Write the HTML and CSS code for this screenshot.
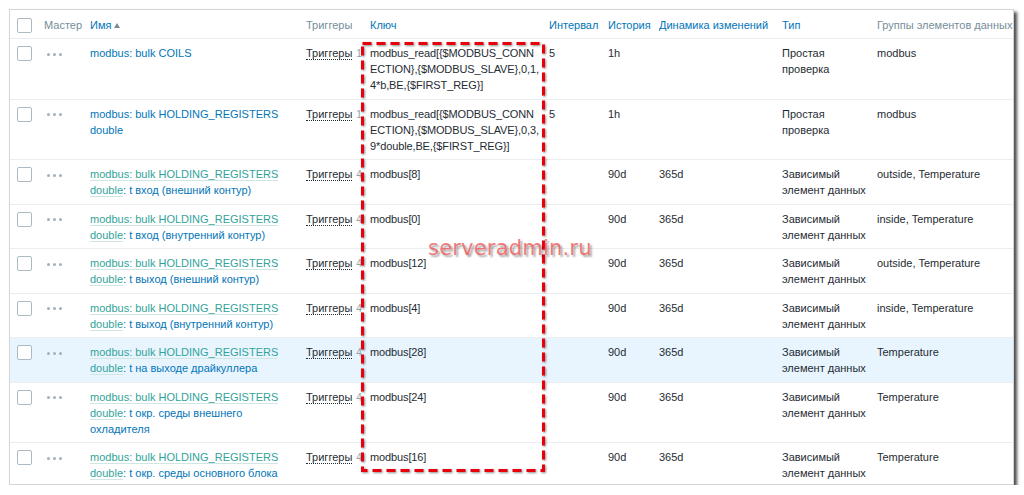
FILE: index.html
```html
<!DOCTYPE html>
<html lang="ru">
<head>
<meta charset="utf-8">
<title>Элементы данных</title>
<link rel="stylesheet" href="styles.css">
</head>
<body>
<div class="panel">
  <table class="list">
    <colgroup>
      <col class="c-check"><col class="c-master"><col class="c-name"><col class="c-trig"><col class="c-key"><col class="c-int"><col class="c-hist"><col class="c-trend"><col class="c-type"><col class="c-groups">
    </colgroup>
    <thead>
      <tr>
        <th class="cb-cell"><span class="cb"></span></th>
        <th class="muted">Мастер</th>
        <th><span class="sort">Имя</span><span class="arrow"></span></th>
        <th class="muted">Триггеры</th>
        <th class="sort">Ключ</th>
        <th class="sort">Интервал</th>
        <th class="sort">История</th>
        <th class="sort">Динамика изменений</th>
        <th class="sort">Тип</th>
        <th class="muted">Группы элементов данных</th>
      </tr>
    </thead>
    <tbody>
      <tr>
        <td class="cb-cell"><span class="cb"></span></td>
        <td><span class="more"><i></i><i></i><i></i></span></td>
        <td><span class="link">modbus: bulk COILS</span></td>
        <td><span class="trig">Триггеры</span><span class="cnt">1</span></td>
        <td class="key">modbus_read[{$MODBUS_CONN<wbr>ECTION},{$MODBUS_SLAVE},0,1,<wbr>4*b,BE,{$FIRST_REG}]</td>
        <td>5</td>
        <td>1h</td>
        <td></td>
        <td>Простая проверка</td>
        <td>modbus</td>
      </tr>
      <tr>
        <td class="cb-cell"><span class="cb"></span></td>
        <td><span class="more"><i></i><i></i><i></i></span></td>
        <td><span class="link">modbus: bulk HOLDING_REGISTERS double</span></td>
        <td><span class="trig">Триггеры</span><span class="cnt">1</span></td>
        <td class="key">modbus_read[{$MODBUS_CONN<wbr>ECTION},{$MODBUS_SLAVE},0,3,<wbr>9*double,BE,{$FIRST_REG}]</td>
        <td>5</td>
        <td>1h</td>
        <td></td>
        <td>Простая проверка</td>
        <td>modbus</td>
      </tr>
      <tr>
        <td class="cb-cell"><span class="cb"></span></td>
        <td><span class="more"><i></i><i></i><i></i></span></td>
        <td><span class="teal">modbus: bulk HOLDING_REGISTERS double</span><span class="link">: t вход (внешний контур)</span></td>
        <td><span class="trig">Триггеры</span><span class="cnt">4</span></td>
        <td class="key">modbus[8]</td>
        <td></td>
        <td>90d</td>
        <td>365d</td>
        <td>Зависимый элемент данных</td>
        <td>outside, Temperature</td>
      </tr>
      <tr>
        <td class="cb-cell"><span class="cb"></span></td>
        <td><span class="more"><i></i><i></i><i></i></span></td>
        <td><span class="teal">modbus: bulk HOLDING_REGISTERS double</span><span class="link">: t вход (внутренний контур)</span></td>
        <td><span class="trig">Триггеры</span><span class="cnt">4</span></td>
        <td class="key">modbus[0]</td>
        <td></td>
        <td>90d</td>
        <td>365d</td>
        <td>Зависимый элемент данных</td>
        <td>inside, Temperature</td>
      </tr>
      <tr>
        <td class="cb-cell"><span class="cb"></span></td>
        <td><span class="more"><i></i><i></i><i></i></span></td>
        <td><span class="teal">modbus: bulk HOLDING_REGISTERS double</span><span class="link">: t выход (внешний контур)</span></td>
        <td><span class="trig">Триггеры</span><span class="cnt">4</span></td>
        <td class="key">modbus[12]</td>
        <td></td>
        <td>90d</td>
        <td>365d</td>
        <td>Зависимый элемент данных</td>
        <td>outside, Temperature</td>
      </tr>
      <tr>
        <td class="cb-cell"><span class="cb"></span></td>
        <td><span class="more"><i></i><i></i><i></i></span></td>
        <td><span class="teal">modbus: bulk HOLDING_REGISTERS double</span><span class="link">: t выход (внутренний контур)</span></td>
        <td><span class="trig">Триггеры</span><span class="cnt">4</span></td>
        <td class="key">modbus[4]</td>
        <td></td>
        <td>90d</td>
        <td>365d</td>
        <td>Зависимый элемент данных</td>
        <td>inside, Temperature</td>
      </tr>
      <tr class="hover">
        <td class="cb-cell"><span class="cb"></span></td>
        <td><span class="more"><i></i><i></i><i></i></span></td>
        <td><span class="teal">modbus: bulk HOLDING_REGISTERS double</span><span class="link">: t на выходе драйкуллера</span></td>
        <td><span class="trig">Триггеры</span><span class="cnt">4</span></td>
        <td class="key">modbus[28]</td>
        <td></td>
        <td>90d</td>
        <td>365d</td>
        <td>Зависимый элемент данных</td>
        <td>Temperature</td>
      </tr>
      <tr>
        <td class="cb-cell"><span class="cb"></span></td>
        <td><span class="more"><i></i><i></i><i></i></span></td>
        <td><span class="teal">modbus: bulk HOLDING_REGISTERS double</span><span class="link">: t окр. среды внешнего охладителя</span></td>
        <td><span class="trig">Триггеры</span><span class="cnt">4</span></td>
        <td class="key">modbus[24]</td>
        <td></td>
        <td>90d</td>
        <td>365d</td>
        <td>Зависимый элемент данных</td>
        <td>Temperature</td>
      </tr>
      <tr>
        <td class="cb-cell"><span class="cb"></span></td>
        <td><span class="more"><i></i><i></i><i></i></span></td>
        <td><span class="teal">modbus: bulk HOLDING_REGISTERS double</span><span class="link">: t окр. среды основного блока</span></td>
        <td><span class="trig">Триггеры</span><span class="cnt">4</span></td>
        <td class="key">modbus[16]</td>
        <td></td>
        <td>90d</td>
        <td>365d</td>
        <td>Зависимый элемент данных</td>
        <td>Temperature</td>
      </tr>
    </tbody>
  </table>

  <svg class="highlight-box" width="187" height="433" viewBox="0 0 187 433">
    <rect x="1.5" y="1.5" width="181" height="427" fill="none" stroke="#e8000b" stroke-width="3" stroke-dasharray="9 5"/>
  </svg>
  <div class="watermark">serveradmin.ru</div>
</div>
</body>
</html>
```

FILE: styles.css
```css
html, body {
  margin: 0;
  padding: 0;
  background: #ffffff;
}

body {
  font-family: "Liberation Sans", Arial, sans-serif;
  font-size: 11px;
  color: #1f2c33;
}

.panel {
  position: relative;
  margin: 9px 0 0 9px;
  width: 1003px;
  height: 474px;
  border: 1px solid #d3d6d8;
  background: #ffffff;
  box-shadow: 3px 3px 3px rgba(0, 0, 0, 0.7);
  overflow: hidden;
}

.list {
  width: 1003px;
  table-layout: fixed;
  border-collapse: collapse;
}

.c-check { width: 29px; }
.c-master { width: 46px; }
.c-name { width: 216px; }
.c-trig { width: 64px; }
.c-key { width: 179px; }
.c-int { width: 59px; }
.c-hist { width: 51px; }
.c-trend { width: 123px; }
.c-type { width: 95px; }
.c-groups { width: 141px; }

.list th {
  text-align: left;
  font-weight: normal;
  padding: 7px 5px 5px;
  line-height: 16px;
  white-space: nowrap;
  overflow: hidden;
  border-bottom: 1px solid #ebeef0;
  color: #0275b8;
}

.list th.muted {
  color: #768d99;
}

.list td {
  vertical-align: top;
  padding: 6px 5px 5.5px;
  line-height: 16px;
  border-bottom: 1px solid #ebeef0;
  overflow: hidden;
}

.list tr.hover td {
  background: #e8f5ff;
}

.list .cb-cell {
  padding-left: 7px;
  padding-right: 0;
}

.cb {
  display: block;
  width: 13px;
  height: 13px;
  margin-top: 1px;
  border: 1px solid #acbbc2;
  border-radius: 2px;
  background: #ffffff;
}

.arrow {
  display: inline-block;
  width: 0;
  height: 0;
  margin-left: 3px;
  vertical-align: 1px;
  border-left: 3.5px solid transparent;
  border-right: 3.5px solid transparent;
  border-bottom: 5px solid #768d99;
}

.more {
  display: inline-flex;
  gap: 3px;
  margin-left: 3px;
  vertical-align: middle;
}

.more i {
  display: block;
  width: 3px;
  height: 3px;
  border-radius: 50%;
  background: #a3b0b7;
}

.link {
  color: #0275b8;
}

.teal {
  color: #31a39b;
  border-bottom: 1px solid #cfe6e4;
}

.trig {
  border-bottom: 1px dotted #1f2c33;
}

.cnt {
  color: #8fa2ab;
  font-size: 10px;
  margin-left: 4px;
}

.list td.key {
  padding-right: 1px;
  letter-spacing: -0.12px;
  overflow-wrap: anywhere;
}

.highlight-box {
  position: absolute;
  left: 351px;
  top: 32px;
  filter: drop-shadow(1px 1px 1px rgba(0, 0, 0, 0.45));
}

.watermark {
  position: absolute;
  left: 418px;
  top: 226px;
  font-family: "DejaVu Sans", sans-serif;
  font-size: 21px;
  line-height: 24px;
  color: rgba(240, 100, 100, 0.85);
  text-shadow: 2px 2px 2px rgba(0, 0, 0, 0.35);
  letter-spacing: 0.2px;
}
```
